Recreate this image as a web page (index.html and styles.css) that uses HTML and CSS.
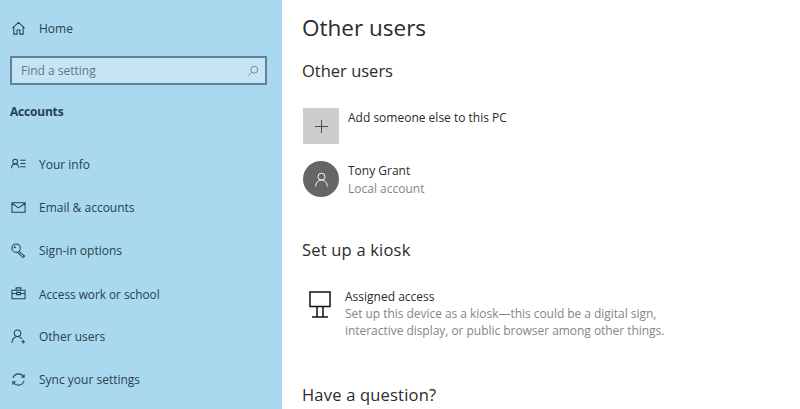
FILE: index.html
```html
<!DOCTYPE html>
<html lang="en">
<head>
<meta charset="utf-8">
<title>Other users</title>
<link rel="stylesheet" href="styles.css">
</head>
<body>
<div class="app">
  <aside class="sidebar">
    <div class="nav-item home">
      <svg class="icon" viewBox="0 0 16 16"><path d="M1.500 7.500 8 1.500l6.500 6M3 6.500V14h3.500V9.500h3V14H13V6.500"/></svg>
      <span>Home</span>
    </div>
    <div class="search">
      <span>Find a setting</span>
      <svg class="search-icon" viewBox="0 0 14 14"><circle cx="8.500" cy="5.500" r="4"/><path d="M5.500 8.500 1.500 12.500"/></svg>
    </div>
    <div class="section">Accounts</div>
    <nav class="nav">
      <div class="nav-item">
        <svg class="icon" viewBox="0 0 16 16"><circle cx="4.500" cy="5" r="2.500"/><path d="M.5 12c0-3 1.500-4.500 4-4.500s4 1.500 4 4.500M10 3.500h5.500M10 7h5.500M10 10.500h5.500"/></svg>
        <span>Your info</span>
      </div>
      <div class="nav-item">
        <svg class="icon" viewBox="0 0 16 16"><path d="M1 3h14v10H1zM1 3.500 8 8.500l7-5"/></svg>
        <span>Email &amp; accounts</span>
      </div>
      <div class="nav-item">
        <svg class="icon" viewBox="0 0 16 16"><circle cx="5.500" cy="5.500" r="4.500"/><circle cx="4" cy="4.500" r=".6"/><path d="M8.500 9 14.500 14 13 15.500 11.500 14 10.500 13.500 7 10"/></svg>
        <span>Sign-in options</span>
      </div>
      <div class="nav-item">
        <svg class="icon" viewBox="0 0 16 16"><path d="M1 4.500h14v9H1zM5.500 4.500V2h5v2.500M1 8h5M10 8h5M6 6.800h4V9.200H6z"/></svg>
        <span class="tight">Access work or school</span>
      </div>
      <div class="nav-item">
        <svg class="icon" viewBox="0 0 16 16"><circle cx="7" cy="4.500" r="3.500"/><path d="M1 15c0-4 2.500-7 6-7 2 0 3.500 1 4.500 2.500M13 11.500v4M11 13.500h4"/></svg>
        <span>Other users</span>
      </div>
      <div class="nav-item">
        <svg class="icon" viewBox="0 0 16 16"><path d="M2 6.500C3 3.500 5.300 2 8 2c2.500 0 4.500 1.300 5.500 3.500M14 9.500C13 12.500 10.700 14 8 14c-2.500 0-4.500-1.300-5.500-3.500M11 5.500h3V2.500M5 10.500H2v3"/></svg>
        <span>Sync your settings</span>
      </div>
    </nav>
  </aside>
  <main class="content">
    <h1>Other users</h1>
    <h2>Other users</h2>
    <div class="user-row add">
      <div class="tile"><svg viewBox="0 0 16 16"><path d="M8 1v14M1 8h14"/></svg></div>
      <div class="label add-label">Add someone else to this PC</div>
    </div>
    <div class="user-row person">
      <div class="avatar"><svg viewBox="0 0 16 16"><circle cx="8" cy="5" r="3.700"/><path d="M1.800 15.500c0-4 2.500-6.800 6.200-6.800s6.200 2.800 6.200 6.800"/></svg></div>
      <div>
        <div class="label">Tony Grant</div>
        <div class="muted">Local account</div>
      </div>
    </div>
    <h2 class="kiosk-title">Set up a kiosk</h2>
    <div class="kiosk">
      <svg class="kiosk-icon" viewBox="0 0 22 27"><path d="M1 1h20v14.500H1zM8 15.500V26M14 15.500V26M3 26h16"/></svg>
      <div>
        <div class="label">Assigned access</div>
        <div class="muted">Set up this device as a kiosk—this could be a digital sign,<br>interactive display, or public browser among other things.</div>
      </div>
    </div>
    <h2 class="question">Have a question?</h2>
  </main>
</div>
</body>
</html>
```

FILE: styles.css
```css
html, body {
  margin: 0;
  height: 100%;
  overflow: hidden;
  background: #fff;
  font-family: "Open Sans", "Noto Sans", sans-serif;
  color: #1f2b33;
}
.app {
  display: flex;
  height: 409px;
  overflow: hidden;
}
.sidebar {
  width: 282px;
  flex: none;
  box-sizing: border-box;
  padding-top: 7px;
  background: #aad8ee;
  color: #26414f;
  font-size: 12px;
}
.nav-item {
  display: flex;
  align-items: center;
  gap: 13px;
  height: 43px;
  padding-left: 11px;
}
.tight {
  font-size: 11.800px;
}
.icon {
  width: 15px;
  height: 15px;
  flex: none;
  fill: none;
  stroke: #26414f;
  stroke-width: 1.100;
}
.home {
  height: 42px;
}
.search {
  display: flex;
  align-items: center;
  justify-content: space-between;
  box-sizing: border-box;
  width: 257px;
  height: 29px;
  margin: 7px 0 0 10px;
  padding: 0 6px 0 9px;
  background: #c6e4f3;
  border: 2px solid #5f8498;
  color: #5e7786;
}
.search-icon {
  width: 12px;
  height: 12px;
  fill: none;
  stroke: #65808f;
}
.section {
  margin: 18px 0 0 10px;
  height: 17px;
  font-weight: 700;
  line-height: 17px;
  letter-spacing: -.2px;
}
.nav {
  margin-top: 23px;
}
.content {
  flex: 1;
  padding: 0 0 0 20px;
}
h1 {
  margin: 13px 0 0;
  font-size: 22.500px;
  font-weight: 400;
  line-height: 30px;
  color: #2b2b2b;
}
h2 {
  margin: 16px 0 0;
  font-size: 16.500px;
  font-weight: 400;
  line-height: 24px;
  color: #2b2b2b;
}
.user-row {
  display: flex;
  gap: 9px;
  margin-left: 1px;
}
.add {
  margin-top: 25px;
}
.add-label {
  margin-top: 1px;
}
.tile {
  display: flex;
  align-items: center;
  justify-content: center;
  width: 36px;
  height: 36px;
  background: #cdcdcd;
}
.tile svg {
  width: 15px;
  height: 15px;
  fill: none;
  stroke: #444;
}
.label {
  font-size: 12px;
  line-height: 17px;
  color: #2b2b2b;
}
.person {
  margin-top: 17px;
}
.person .label {
  margin-top: 1px;
}
.avatar {
  display: flex;
  align-items: center;
  justify-content: center;
  width: 36px;
  height: 36px;
  border-radius: 50%;
  background: #666;
}
.avatar svg {
  width: 15px;
  height: 15px;
  fill: none;
  stroke: #fff;
}
.muted {
  font-size: 12px;
  line-height: 17px;
  color: #858585;
}
.person .muted {
  margin-top: 1px;
}
.kiosk-title {
  margin-top: 41px;
  letter-spacing: .2px;
}
.kiosk {
  display: flex;
  gap: 14px;
  margin: 26px 0 0 7px;
}
.kiosk .muted {
  letter-spacing: -.04px;
}
.kiosk-icon {
  width: 22px;
  height: 27px;
  margin-top: 3px;
  fill: none;
  stroke: #111;
  stroke-width: 1.500;
}
.question {
  margin-top: 44px;
  letter-spacing: .2px;
}
```
